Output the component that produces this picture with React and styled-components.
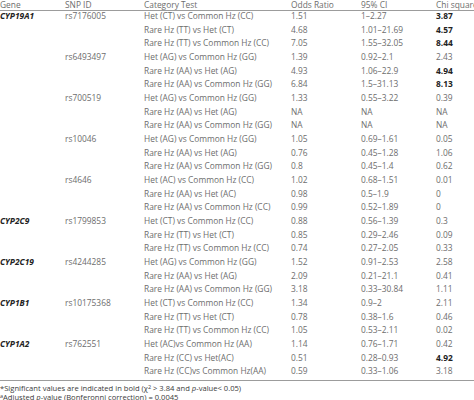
import React from 'react';
import styled, { createGlobalStyle } from 'styled-components';

const GlobalStyle = createGlobalStyle`
    html, body {
        margin: 0;
        padding: 0;
        background: #fff;
        overflow: hidden;
    }
    body {
        font-family: "Open Sans", Lato, sans-serif;
        color: #6d6d6d;
    }
`;

const COLS = '65px 79px 147px 70px 75px 1fr';

const Table = styled.div`
    width: 474px;
    height: 400px;
    font-size: 8.4px;
`;

const HeaderRow = styled.div`
    display: grid;
    grid-template-columns: ${COLS};
    height: 11px;
    line-height: 9px;
    border-bottom: 1px solid #9c9c9c;
    box-sizing: border-box;
    white-space: nowrap;
`;

const Row = styled.div`
    display: grid;
    grid-template-columns: ${COLS};
    height: 13.68px;
    line-height: 10px;
    white-space: nowrap;
`;

const Cell = styled.span`
    font-weight: ${p => (p.$bold ? 700 : 400)};
    color: ${p => (p.$bold ? '#222' : 'inherit')};
    font-style: ${p => (p.$italic ? 'italic' : 'normal')};
`;

const Sup = styled.span`
    font-size: 5.5px;
    line-height: 0;
    position: relative;
    top: -2.5px;
`;

const Body = styled.div`
    border-bottom: 1px solid #9c9c9c;
`;

const Notes = styled.div`
    padding-top: 3px;
    font-size: 7.6px;
    line-height: 9px;
    color: #3a3a3a;
    white-space: nowrap;
`;

const rows = [
    ['CYP19A1', 'rs7176005', 'Het (CT) vs Common Hz (CC)', '1.51', '1–2.27', '3.87', true],
    ['', '', 'Rare Hz (TT) vs Het (CT)', '4.68', '1.01–21.69', '4.57', true],
    ['', '', 'Rare Hz (TT) vs Common Hz (CC)', '7.05', '1.55–32.05', '8.44', true],
    ['', 'rs6493497', 'Het (AG) vs Common Hz (GG)', '1.39', '0.92–2.1', '2.43'],
    ['', '', 'Rare Hz (AA) vs Het (AG)', '4.93', '1.06–22.9', '4.94', true],
    ['', '', 'Rare Hz (AA) vs Common Hz (GG)', '6.84', '1.5–31.13', '8.13', true],
    ['', 'rs700519', 'Het (AG) vs Common Hz (GG)', '1.33', '0.55–3.22', '0.39'],
    ['', '', 'Rare Hz (AA) vs Het (AG)', 'NA', 'NA', 'NA'],
    ['', '', 'Rare Hz (AA) vs Common Hz (GG)', 'NA', 'NA', 'NA'],
    ['', 'rs10046', 'Het (AG) vs Common Hz (GG)', '1.05', '0.69–1.61', '0.05'],
    ['', '', 'Rare Hz (AA) vs Het (AG)', '0.76', '0.45–1.28', '1.06'],
    ['', '', 'Rare Hz (AA) vs Common Hz (GG)', '0.8', '0.45–1.4', '0.62'],
    ['', 'rs4646', 'Het (AC) vs Common Hz (CC)', '1.02', '0.68–1.51', '0.01'],
    ['', '', 'Rare Hz (AA) vs Het (AC)', '0.98', '0.5–1.9', '0'],
    ['', '', 'Rare Hz (AA) vs Common Hz (CC)', '0.99', '0.52–1.89', '0'],
    ['CYP2C9', 'rs1799853', 'Het (CT) vs Common Hz (CC)', '0.88', '0.56–1.39', '0.3'],
    ['', '', 'Rare Hz (TT) vs Het (CT)', '0.85', '0.29–2.46', '0.09'],
    ['', '', 'Rare Hz (TT) vs Common Hz (CC)', '0.74', '0.27–2.05', '0.33'],
    ['CYP2C19', 'rs4244285', 'Het (AG) vs Common Hz (GG)', '1.52', '0.91–2.53', '2.58'],
    ['', '', 'Rare Hz (AA) vs Het (AG)', '2.09', '0.21–21.1', '0.41'],
    ['', '', 'Rare Hz (AA) vs Common Hz (GG)', '3.18', '0.33–30.84', '1.11'],
    ['CYP1B1', 'rs10175368', 'Het (CT) vs Common Hz (CC)', '1.34', '0.9–2', '2.11'],
    ['', '', 'Rare Hz (TT) vs Het (CT)', '0.78', '0.38–1.6', '0.46'],
    ['', '', 'Rare Hz (TT) vs Common Hz (CC)', '1.05', '0.53–2.11', '0.02'],
    ['CYP1A2', 'rs762551', 'Het (AC)vs Common Hz (AA)', '1.14', '0.76–1.71', '0.42'],
    ['', '', 'Rare Hz (CC) vs Het(AC)', '0.51', '0.28–0.93', '4.92', true],
    ['', '', 'Rare Hz (CC)vs Common Hz(AA)', '0.59', '0.33–1.06', '3.18'],
];

export default function App() {
    return (
        <>
            <GlobalStyle />
            <Table>
                <HeaderRow>
                    <Cell>Gene</Cell>
                    <Cell>SNP ID</Cell>
                    <Cell>Category Test</Cell>
                    <Cell>Odds Ratio</Cell>
                    <Cell>95% CI</Cell>
                    <Cell>Chi square<Sup>a</Sup></Cell>
                </HeaderRow>
                <Body>
                    {rows.map(([gene, snp, test, or, ci, chi, sig], i) => (
                        <Row key={i}>
                            <Cell $bold $italic>{gene}</Cell>
                            <Cell>{snp}</Cell>
                            <Cell>{test}</Cell>
                            <Cell>{or}</Cell>
                            <Cell>{ci}</Cell>
                            <Cell $bold={sig}>{chi}</Cell>
                        </Row>
                    ))}
                </Body>
                <Notes>
                    <div>*Significant values are indicated in bold (χ<Sup>2</Sup> &gt; 3.84 and <i>p</i>-value&lt; 0.05)</div>
                    <div><Sup>a</Sup>Adjusted <i>p</i>-value (Bonferonni correction) = 0.0045</div>
                </Notes>
            </Table>
        </>
    );
}
